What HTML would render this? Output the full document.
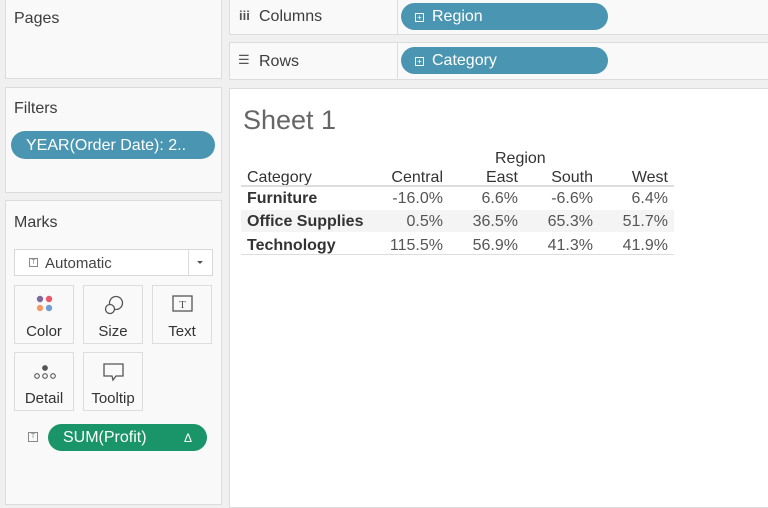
<!DOCTYPE html><html><head><style>
*{box-sizing:border-box;margin:0;padding:0}
body{width:768px;height:501px;background:#f0f0f0;font-family:"Liberation Sans",sans-serif;position:relative;overflow:hidden;color:#333}
.p{position:absolute;background:#f9f9f9;border:1px solid #dcdcdc}
.t{position:absolute;font-size:16px;color:#3c3c3c}
.pill{position:absolute;background:#4a96b2;color:#fff;border-radius:14px;font-size:16px;line-height:28px}
.sq{display:inline-block;width:9px;height:9px;border:1px solid #fff;font-size:8px;line-height:7px;text-align:center;margin-right:8px;vertical-align:1px}
.btn{position:absolute;width:60px;height:59px;border:1px solid #ddd;background:#f9f9f9;text-align:center;font-size:15px;color:#333}
.btn .l{position:absolute;left:0;right:0;bottom:3px}
.c{position:absolute;font-size:16px;color:#555;text-align:right;width:80px}
.h{position:absolute;font-size:16px;color:#333}
</style></head><body>
<div class="p" style="left:5px;top:-2px;width:217px;height:81px"></div>
<div class="t" style="left:14px;top:10px">Pages</div>
<div class="p" style="left:5px;top:87px;width:217px;height:106px"></div>
<div class="t" style="left:14px;top:100px">Filters</div>
<div class="pill" style="left:11px;top:131px;width:204px;height:28px;padding-left:15px;line-height:29px">YEAR(Order Date): 2..</div>
<div class="p" style="left:5px;top:200px;width:217px;height:305px"></div>
<div class="t" style="left:14px;top:214px">Marks</div>
<div style="position:absolute;left:14px;top:249px;width:199px;height:27px;border:1px solid #d8d8d8;background:#fff"></div>
<div style="position:absolute;left:188px;top:250px;width:1px;height:25px;background:#ddd"></div>
<div style="position:absolute;left:29px;top:258px;width:9px;height:9px;border:1px solid #888;font-size:7px;line-height:7px;text-align:center;color:#888">T</div>
<div class="t" style="left:45px;top:255px;font-size:15px;color:#444">Automatic</div>
<div style="position:absolute;left:197px;top:261px;border:3px solid transparent;border-top:3px solid #555"></div>
<div class="btn" style="left:14px;top:285px"><svg width="20" height="20" style="position:absolute;left:20px;top:9px"><circle cx="5" cy="4" r="3.2" fill="#7b6a9b"/><circle cx="14" cy="4" r="3.2" fill="#e8586a"/><circle cx="5" cy="13" r="3.2" fill="#f19a6a"/><circle cx="14" cy="13" r="3.2" fill="#6f9fd0"/></svg><span class="l">Color</span></div>
<div class="btn" style="left:83px;top:285px"><svg width="22" height="22" style="position:absolute;left:19px;top:8px" fill="none" stroke="#555" stroke-width="1.3"><circle cx="13" cy="9" r="6.5"/><circle cx="7" cy="15" r="4.5" fill="#f9f9f9"/></svg><span class="l">Size</span></div>
<div class="btn" style="left:152px;top:285px"><svg width="22" height="20" style="position:absolute;left:19px;top:9px"><rect x="1" y="1" width="19" height="15" fill="none" stroke="#555" stroke-width="1.3"/><text x="10.5" y="13" font-size="11" text-anchor="middle" fill="#555" font-family="Liberation Serif">T</text></svg><span class="l">Text</span></div>
<div class="btn" style="left:14px;top:352px"><svg width="24" height="16" style="position:absolute;left:18px;top:12px" fill="none" stroke="#555" stroke-width="1.1"><circle cx="12" cy="3" r="2.3" fill="#555"/><circle cx="4" cy="11" r="2.3"/><circle cx="12" cy="11" r="2.3"/><circle cx="20" cy="11" r="2.3"/></svg><span class="l">Detail</span></div>
<div class="btn" style="left:83px;top:352px"><svg width="22" height="20" style="position:absolute;left:19px;top:10px" fill="none" stroke="#555" stroke-width="1.3"><path d="M1 1H20V13H13L10 17L9 13H1Z"/></svg><span class="l">Tooltip</span></div>
<div style="position:absolute;left:28px;top:432px;width:10px;height:10px;border:1px solid #888;font-size:7px;line-height:8px;text-align:center;color:#888">T</div>
<div class="pill" style="left:48px;top:424px;width:159px;height:27px;background:#1a9569;padding-left:15px;line-height:28px">SUM(Profit)<span style="position:absolute;right:15px;font-size:12px">&#916;</span></div>
<div class="p" style="left:229px;top:-2px;width:545px;height:37px;background:#f9f9f9"></div>
<div style="position:absolute;left:397px;top:0;width:1px;height:34px;background:#ddd"></div>
<div class="t" style="left:239px;top:8px;font-size:13px;font-weight:bold;color:#555">iii</div>
<div class="t" style="left:259px;top:8px">Columns</div>
<div class="pill" style="left:401px;top:3px;width:207px;height:27px;padding-left:14px;line-height:28px"><span class="sq">+</span>Region</div>
<div class="p" style="left:229px;top:42px;width:545px;height:38px"></div>
<div style="position:absolute;left:397px;top:43px;width:1px;height:36px;background:#ddd"></div>
<div class="t" style="left:238px;top:52px;font-size:13px;color:#555">&#9776;</div>
<div class="t" style="left:259px;top:53px">Rows</div>
<div class="pill" style="left:401px;top:47px;width:207px;height:27px;padding-left:14px;line-height:28px"><span class="sq">+</span>Category</div>
<div style="position:absolute;left:229px;top:88px;width:545px;height:420px;background:#fff;border:1px solid #dcdcdc"></div>
<div style="position:absolute;left:243px;top:105px;font-size:27px;color:#666">Sheet 1</div>
<div class="h" style="left:495px;top:150px">Region</div>
<div class="h" style="left:247px;top:169px">Category</div>
<div class="c" style="left:363px;top:169px;color:#333">Central</div>
<div class="c" style="left:438px;top:169px;color:#333">East</div>
<div class="c" style="left:513px;top:169px;color:#333">South</div>
<div class="c" style="left:588px;top:169px;color:#333">West</div>
<div style="position:absolute;left:241px;top:185px;width:433px;height:2px;background:#ddd"></div>
<div style="position:absolute;left:241px;top:210px;width:433px;height:22px;background:#f4f4f4"></div>
<div style="position:absolute;left:241px;top:254px;width:433px;height:1px;background:#ddd"></div>
<div class="h" style="left:247px;top:190px;font-weight:bold;color:#333">Furniture</div>
<div class="h" style="left:247px;top:213px;font-weight:bold;color:#333">Office Supplies</div>
<div class="h" style="left:247px;top:237px;font-weight:bold;color:#333">Technology</div>
<div class="c" style="left:363px;top:190px">-16.0%</div><div class="c" style="left:438px;top:190px">6.6%</div><div class="c" style="left:513px;top:190px">-6.6%</div><div class="c" style="left:588px;top:190px">6.4%</div>
<div class="c" style="left:363px;top:213px">0.5%</div><div class="c" style="left:438px;top:213px">36.5%</div><div class="c" style="left:513px;top:213px">65.3%</div><div class="c" style="left:588px;top:213px">51.7%</div>
<div class="c" style="left:363px;top:237px">115.5%</div><div class="c" style="left:438px;top:237px">56.9%</div><div class="c" style="left:513px;top:237px">41.3%</div><div class="c" style="left:588px;top:237px">41.9%</div>
</body></html>
